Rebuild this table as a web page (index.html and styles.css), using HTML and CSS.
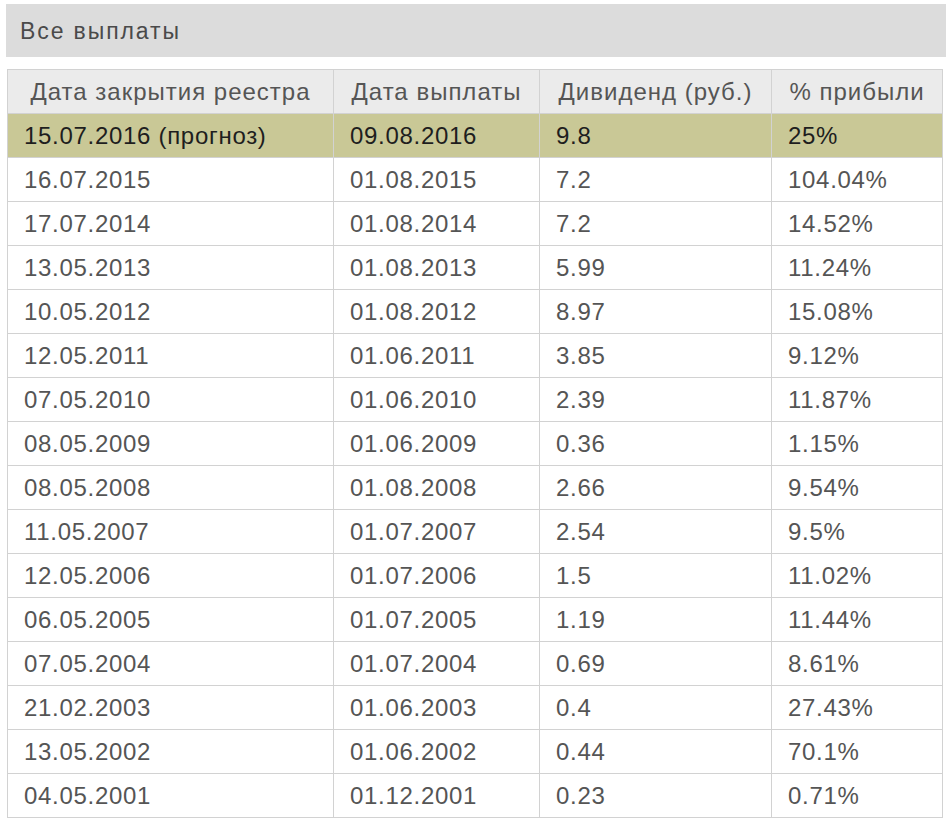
FILE: index.html
```html
<!DOCTYPE html>
<html lang="ru">
<head>
<meta charset="utf-8">
<title>Все выплаты</title>
<link rel="stylesheet" href="styles.css">
</head>
<body>
<div class="title">Все выплаты</div>
<table class="pay">
<colgroup><col class="c1"><col class="c2"><col class="c3"><col class="c4"></colgroup>
<thead>
<tr><th>Дата закрытия реестра</th><th>Дата выплаты</th><th>Дивиденд (руб.)</th><th>% прибыли</th></tr>
</thead>
<tbody>
<tr class="hl"><td>15.07.2016 (прогноз)</td><td>09.08.2016</td><td>9.8</td><td>25%</td></tr>
<tr><td>16.07.2015</td><td>01.08.2015</td><td>7.2</td><td>104.04%</td></tr>
<tr><td>17.07.2014</td><td>01.08.2014</td><td>7.2</td><td>14.52%</td></tr>
<tr><td>13.05.2013</td><td>01.08.2013</td><td>5.99</td><td>11.24%</td></tr>
<tr><td>10.05.2012</td><td>01.08.2012</td><td>8.97</td><td>15.08%</td></tr>
<tr><td>12.05.2011</td><td>01.06.2011</td><td>3.85</td><td>9.12%</td></tr>
<tr><td>07.05.2010</td><td>01.06.2010</td><td>2.39</td><td>11.87%</td></tr>
<tr><td>08.05.2009</td><td>01.06.2009</td><td>0.36</td><td>1.15%</td></tr>
<tr><td>08.05.2008</td><td>01.08.2008</td><td>2.66</td><td>9.54%</td></tr>
<tr><td>11.05.2007</td><td>01.07.2007</td><td>2.54</td><td>9.5%</td></tr>
<tr><td>12.05.2006</td><td>01.07.2006</td><td>1.5</td><td>11.02%</td></tr>
<tr><td>06.05.2005</td><td>01.07.2005</td><td>1.19</td><td>11.44%</td></tr>
<tr><td>07.05.2004</td><td>01.07.2004</td><td>0.69</td><td>8.61%</td></tr>
<tr><td>21.02.2003</td><td>01.06.2003</td><td>0.4</td><td>27.43%</td></tr>
<tr><td>13.05.2002</td><td>01.06.2002</td><td>0.44</td><td>70.1%</td></tr>
<tr><td>04.05.2001</td><td>01.12.2001</td><td>0.23</td><td>0.71%</td></tr>
</tbody>
</table>
</body>
</html>
```
FILE: styles.css
```css
html, body {
  margin: 0;
  padding: 0;
  background: #ffffff;
}
body {
  font-family: "Liberation Sans", Arial, sans-serif;
  color: #555555;
  padding-top: 4px;
}
.title {
  margin-left: 6px;
  height: 53px;
  box-sizing: border-box;
  background: #dcdcdc;
  padding-left: 14px;
  font-size: 23px;
  letter-spacing: 1.9px;
  line-height: 55px;
  color: #4a4a4a;
}
.pay {
  margin-top: 12px;
  margin-left: 7px;
  border-collapse: collapse;
  table-layout: fixed;
  width: 935px;
  border: 1px solid #c4c4c4;
  font-size: 24px;
  letter-spacing: 0.7px;
}
.c1 { width: 326px; }
.c2 { width: 206px; }
.c3 { width: 232px; }
.c4 { width: 171px; }
.pay th, .pay td {
  height: 44px;
  box-sizing: border-box;
  padding: 0 0 0 16px;
  border: 1px solid #d2d2d2;
  white-space: nowrap;
  overflow: hidden;
  vertical-align: middle;
}
.pay th {
  background: #ebebeb;
  font-weight: normal;
  text-align: center;
  padding: 0;
  color: #555555;
  letter-spacing: 1px;
}
.pay td {
  text-align: left;
}
.pay tr.hl td {
  background: #c9c896;
  color: #1e1e1e;
  letter-spacing: 0.7px;
}
```
